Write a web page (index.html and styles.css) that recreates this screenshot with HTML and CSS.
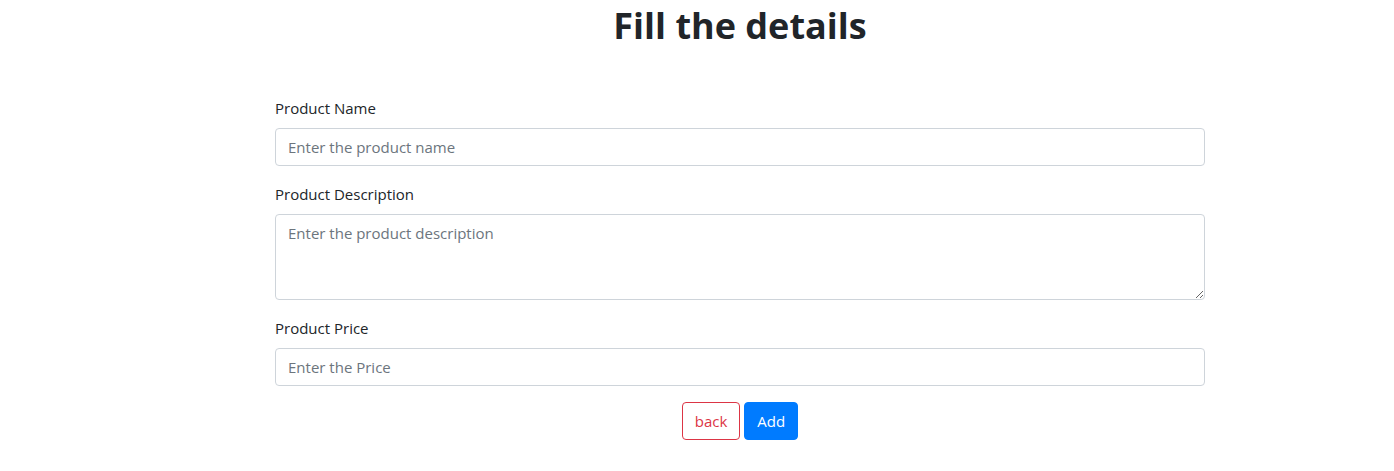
FILE: index.html
```html
<!DOCTYPE html>
<html lang="en">
<head>
<meta charset="UTF-8" />
<meta name="viewport" content="width=device-width, initial-scale=1" />
<title>Add Product</title>
<link rel="stylesheet" href="styles.css">
</head>
<body>
<main class="page">
  <h1 class="page-title">Fill the details</h1>

  <form class="product-form" onsubmit="event.preventDefault();">
    <div class="form-group">
      <label for="product-name">Product Name</label>
      <input type="text" id="product-name" class="form-control" placeholder="Enter the product name" />
    </div>
    <div class="form-group">
      <label for="product-description">Product Description</label>
      <textarea id="product-description" class="form-control" rows="3" placeholder="Enter the product description"></textarea>
    </div>
    <div class="form-group">
      <label for="product-price">Product Price</label>
      <input type="text" id="product-price" class="form-control" placeholder="Enter the Price" />
    </div>
    <div class="form-actions">
      <button type="button" class="btn btn-outline-danger">back</button>
      <button type="submit" class="btn btn-primary">Add</button>
    </div>
  </form>
</main>
</body>
</html>
```

FILE: styles.css
```css
/* Base */
* {
  box-sizing: border-box;
}
body {
  margin: 0;
  font-family: "Open Sans", "Noto Sans", sans-serif;
  font-size: 15px;
  line-height: 24px;
  color: #212529;
  background: #fff;
}

/* Layout */
.page {
  width: 930px;
  margin-left: 275px;
}
.page-title {
  margin: 0 0 44px 0;
  text-align: center;
  font-size: 36px;
  font-weight: 700;
  line-height: 52px;
}

/* Form */
.form-group {
  margin-bottom: 16px;
}
.form-group label {
  display: block;
  margin-bottom: 8px;
}
.form-control {
  display: block;
  width: 100%;
  height: 38px;
  padding: 6px 12px;
  font-family: inherit;
  font-size: 15px;
  line-height: 24px;
  color: #495057;
  background: #fff;
  border: 1px solid #ced4da;
  border-radius: 4px;
}
textarea.form-control {
  height: 86px;
  resize: vertical;
}
.form-control::placeholder {
  color: #6c757d;
}

/* Buttons */
.form-actions {
  display: flex;
  justify-content: center;
  gap: 4px;
}
.btn {
  height: 38px;
  padding: 6px 12px;
  font-family: inherit;
  font-size: 15px;
  line-height: 24px;
  border: 1px solid transparent;
  border-radius: 4px;
  cursor: pointer;
}
.btn-outline-danger {
  color: #dc3545;
  background: #fff;
  border-color: #dc3545;
}
.btn-primary {
  color: #fff;
  background: #007bff;
  border-color: #007bff;
}
```
